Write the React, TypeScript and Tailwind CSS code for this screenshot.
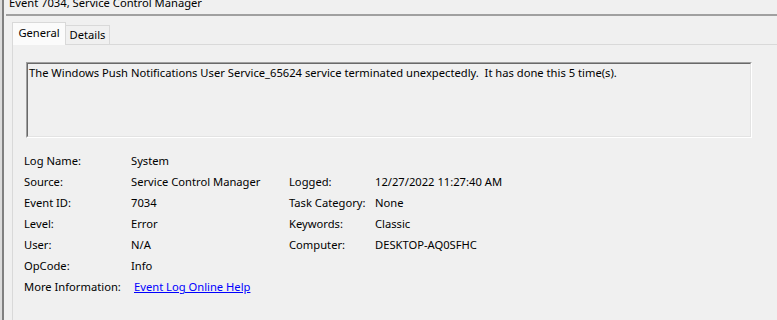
import React from "react";

const rows: [string, string, string, string][] = [
  ["Log Name:", "System", "", ""],
  ["Source:", "Service Control Manager", "Logged:", "12/27/2022 11:27:40 AM"],
  ["Event ID:", "7034", "Task Category:", "None"],
  ["Level:", "Error", "Keywords:", "Classic"],
  ["User:", "N/A", "Computer:", "DESKTOP-AQ0SFHC"],
  ["OpCode:", "Info", "", ""],
];

export default function App() {
  return (
    <div
      className="flex h-[320px] w-[777px] overflow-hidden bg-[#f0f0f0] text-[11.2px] text-black"
      style={{ fontFamily: '"Noto Sans", "Liberation Sans", sans-serif' }}
    >
      {/* window frame edge */}
      <div className="w-[2px] bg-[#dcdcdc]" />
      <div className="w-[2px] bg-[#808080]" />

      <div className="flex flex-1 flex-col">
        {/* title, cut off at the top */}
        <div className="h-[14px] overflow-hidden pl-[5px]">
          <div className="-mt-[4px] leading-[14px]">
            Event 7034, Service Control Manager
          </div>
        </div>
        <div className="ml-[2px] h-[2px] bg-[#a0a0a0]" />

        {/* tabs */}
        <div className="flex h-[28px] items-end pl-[8px]">
          <div className="relative z-10 -mb-px flex h-[23px] w-[54px] items-center justify-center border-x border-t border-[#d9d9d9] bg-[#fbfbfb] pb-px">
            General
          </div>
          <div className="flex h-[19px] w-[44px] items-center justify-center border-t border-r border-[#d9d9d9] bg-[#f0f0f0]">
            Details
          </div>
        </div>

        {/* page */}
        <div className="ml-[8px] flex-1 border-t border-l border-[#d9d9d9] bg-[#f0f0f0]">
          <div className="mt-[17px] ml-[13px] w-[726px] border border-t-[#a0a0a0] border-r-white border-b-white border-l-[#a0a0a0]">
            <div className="h-[74px] border border-t-[#696969] border-r-[#e3e3e3] border-b-[#e3e3e3] border-l-[#696969] pt-px pl-px leading-[16px]">
              The Windows Push Notifications User Service_65624 service terminated
              unexpectedly.&nbsp; It has done this 5 time(s).
            </div>
          </div>

          <div className="mt-[13px] grid auto-rows-[21px] grid-cols-[107px_158px_86px_1fr] items-center pl-[11px] whitespace-nowrap">
            {rows.map((r) => (
              <React.Fragment key={r[0]}>
                <span>{r[0]}</span>
                <span>{r[1]}</span>
                <span>{r[2]}</span>
                <span>{r[3]}</span>
              </React.Fragment>
            ))}
            <span>More Information:</span>
            <a href="#" className="ml-[3px] text-[#0000ff] underline">
              Event Log Online Help
            </a>
          </div>
        </div>
      </div>
    </div>
  );
}
